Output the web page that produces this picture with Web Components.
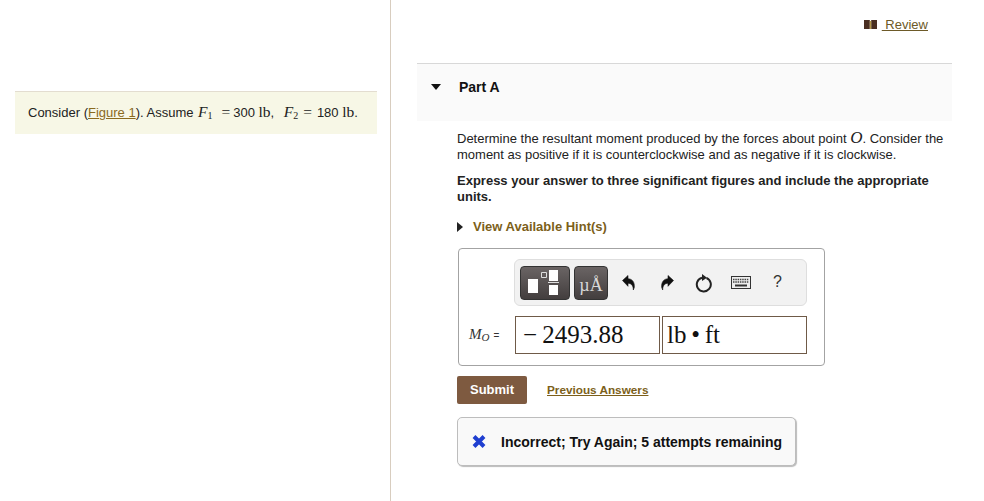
<!DOCTYPE html>
<html>
<head>
<meta charset="utf-8">
<title>Part A</title>
<style>
    html, body { margin: 0; padding: 0; background: white; }
    body { font-family: "Liberation Sans", Arial, sans-serif; font-size: 13px; color: #222; }
</style>
</head>
<body>
<quiz-page></quiz-page>

<script>
class QuizPage extends HTMLElement {
    constructor() {
        super();
        this.attachShadow({ mode: 'open' });
    }

    connectedCallback() {
        this.shadowRoot.innerHTML = `
            <style>
                :host { display: flex; width: 984px; height: 501px; overflow: hidden; }
                .left { width: 391px; box-sizing: border-box; padding: 91px 13px 0 15px; border-right: 1px solid #d8cdbf; flex: none; }
                .right { width: 535px; margin-left: 26px; flex: none; }
            </style>
            <div class="left"><intro-box></intro-box></div>
            <div class="right">
                <review-link></review-link>
                <part-header></part-header>
                <part-body></part-body>
            </div>
        `;
    }
}

class IntroBox extends HTMLElement {
    constructor() {
        super();
        this.attachShadow({ mode: 'open' });
    }

    connectedCallback() {
        this.shadowRoot.innerHTML = `
            <style>
                :host { display: block; height: 43px; box-sizing: border-box; background: #f7f7e6; border-top: 1px solid #e3ddd0; padding: 11px 0 0 13px; font-size: 13px; line-height: 17px; color: #222; white-space: nowrap; }
                a { color: #8a6a1e; text-decoration: underline; }
                .m { font-family: "Liberation Serif", serif; font-size: 15.500px; }
                .m i { font-style: italic; }
                .f1 { margin-left: 1px; }
                .f2 { margin-left: 6px; }
                .eq1 { margin: 0 3px 0 5px; }
                .eq2 { margin: 0 5px 0 1px; }
                sub { font-size: 10px; line-height: 0; vertical-align: -2px; }
            </style>
            Consider (<a href="#">Figure 1</a>). Assume <span class="m f1"><i>F</i><sub>1</sub></span><span class="m eq1"> =</span>300 <span class="m">lb</span>, <span class="m f2"><i>F</i><sub>2</sub></span><span class="m eq2"> =</span>180 <span class="m">lb</span>.
        `;
    }
}

class ReviewLink extends HTMLElement {
    constructor() {
        super();
        this.attachShadow({ mode: 'open' });
    }

    connectedCallback() {
        this.shadowRoot.innerHTML = `
            <style>
                :host { display: flex; justify-content: flex-end; align-items: flex-start; height: 63px; box-sizing: border-box; padding: 17px 24px 0 0; font-size: 13px; line-height: 15px; }
                svg { margin: 3px 5px 0 0; }
                a { color: #6d5a28; text-decoration: underline; white-space: pre; }
            </style>
            <svg width="13" height="9" viewBox="0 0 13 9"><path fill="#4a2f22" d="M0 0h5.800v9H0zM7.200 0H13v9H7.200z"/><path fill="#b59a4a" d="M5.800 1h1.400v8H5.800z"/></svg>
            <a href="#"> Review</a>
        `;
    }
}

class PartHeader extends HTMLElement {
    constructor() {
        super();
        this.attachShadow({ mode: 'open' });
    }

    connectedCallback() {
        this.shadowRoot.innerHTML = `
            <style>
                :host { display: flex; align-items: flex-start; height: 58px; box-sizing: border-box; background: #fafafa; border-top: 1px solid #d8d8d8; padding: 16px 0 0 14px; }
                svg { margin: 4px 18px 0 0; }
                b { font-size: 14px; line-height: 15px; color: #111; }
            </style>
            <svg width="10" height="6" viewBox="0 0 10 6"><path fill="#111" d="M0 0h10L5 6z"/></svg>
            <b>Part A</b>
        `;
    }
}

class PartBody extends HTMLElement {
    constructor() {
        super();
        this.attachShadow({ mode: 'open' });
    }

    connectedCallback() {
        this.shadowRoot.innerHTML = `
            <style>
                :host { display: block; padding: 10px 0 0 40px; font-size: 13px; line-height: 16px; color: #222; white-space: nowrap; }
                p { margin: 0; }
                .o { font-family: "Liberation Serif", serif; font-style: italic; font-size: 17px; line-height: 10px; }
                .express { margin-top: 10px; font-weight: bold; }
                .hint { display: flex; align-items: center; margin-top: 14px; height: 16px; color: #7c5f1a; font-weight: bold; }
                .hint svg { margin-right: 10px; }
                .actions { display: flex; align-items: center; margin-top: 10px; gap: 20px; }
                .submit { width: 70px; height: 28px; background: #7e5a40; border-radius: 2px; color: #fff; font-weight: bold; font-size: 13px; line-height: 28px; text-align: center; }
                .prev { color: #7c5f1a; font-weight: bold; font-size: 11.750px; text-decoration: underline; }
            </style>
            <p>Determine the resultant moment produced by the forces about point <span class="o">O</span>. Consider the<br>moment as positive if it is counterclockwise and as negative if it is clockwise.</p>
            <p class="express">Express your answer to three significant figures and include the appropriate<br>units.</p>
            <div class="hint">
                <svg width="6" height="10" viewBox="0 0 6 10"><path fill="#222" d="M0 0l6 5-6 5z"/></svg>
                View Available Hint(s)
            </div>
            <answer-box></answer-box>
            <div class="actions">
                <div class="submit">Submit</div>
                <a class="prev" href="#">Previous Answers</a>
            </div>
            <feedback-box>Incorrect; Try Again; 5 attempts remaining</feedback-box>
        `;
    }
}

class AnswerBox extends HTMLElement {
    constructor() {
        super();
        this.attachShadow({ mode: 'open' });
    }

    connectedCallback() {
        this.shadowRoot.innerHTML = `
            <style>
                :host { display: block; width: 367px; height: 118px; box-sizing: border-box; margin: 13px 0 10px 1px; border: 1px solid #a3a3a3; border-radius: 4px; padding: 10px 17px 0 56px; }
                math-toolbar { margin: 0 0 10px -1px; }
                .row { display: flex; align-items: center; }
                .label { width: 46px; margin-left: -46px; box-sizing: border-box; font-family: "Liberation Serif", serif; font-size: 15px; white-space: nowrap; color: #333; }
                .label sub { font-size: 11px; line-height: 0; vertical-align: -2px; }
                .label span { font-family: "Liberation Sans", sans-serif; font-size: 10px; margin-left: 4px; font-style: normal; }
                .field { height: 38px; box-sizing: border-box; border: 1px solid #6f5a48; font-family: "Liberation Serif", serif; font-size: 25px; line-height: 35px; color: #111; white-space: nowrap; }
                .value { width: 145px; padding-left: 7px; word-spacing: -1px; }
                .unit { width: 145px; margin-left: 2px; padding-left: 4px; word-spacing: -1.500px; }
            </style>
            <math-toolbar></math-toolbar>
            <div class="row">
                <div class="label"><i>M<sub>O</sub></i><span>=</span></div>
                <div class="field value">&minus; 2493.88</div>
                <div class="field unit">lb &bull; ft</div>
            </div>
        `;
    }
}

class MathToolbar extends HTMLElement {
    constructor() {
        super();
        this.attachShadow({ mode: 'open' });
    }

    connectedCallback() {
        this.shadowRoot.innerHTML = `
            <style>
                :host { display: flex; align-items: center; width: 293px; height: 47px; box-sizing: border-box; background: #f2f2f2; border: 1px solid #dedede; border-radius: 6px; padding: 0 0 0 5px; }
                .btn { height: 34px; box-sizing: border-box; border: 1px solid #333; border-radius: 4px; background: linear-gradient(#6a6464, #433e3e); display: flex; align-items: center; justify-content: center; flex: none; }
                .templates { width: 50px; margin-right: 4px; }
                .units { width: 34px; color: #d8d8d8; font-family: "Liberation Serif", serif; font-size: 18px; line-height: 20px; padding-top: 5px; }
                .tool { flex: none; display: flex; justify-content: center; align-items: center; width: 37px; color: #333; }
                .first { margin-left: 2px; width: 38px; }
                .help { font-size: 16px; line-height: 18px; width: 37px; margin-top: -2px; }
            </style>
            <div class="btn templates">
                <svg width="38" height="26" viewBox="0 0 38 26">
                    <path fill="#fff" d="M2 9h10v14H2zM23 0h9v11h-9zM23 15h9v10h-9z"/>
                    <path fill="#ddd" d="M22 12h11v1H22z"/>
                    <path fill="none" stroke="#ddd" d="M15.500 2.500h5v5h-5z"/>
                </svg>
            </div>
            <div class="btn units">&micro;&Aring;</div>
            <span class="tool first"><svg width="16" height="17" viewBox="0 0 16 17"><path fill="#111" stroke="#111" stroke-width=".6" d="M1.500 6.500L7 1.500v3.200c4.200.2 6.800 3.300 6.300 8.800l-1 2.500c0-4-1.500-6.600-5.300-6.800v3.100z"/></svg></span>
            <span class="tool"><svg width="16" height="17" viewBox="0 0 16 17"><path fill="#111" stroke="#111" stroke-width=".6" d="M14.500 6.500L9 1.500v3.200C4.800 4.900 2.200 8 2.700 13.500l1 2.500c0-4 1.500-6.600 5.300-6.800v3.100z"/></svg></span>
            <span class="tool"><svg width="18" height="20" viewBox="0 0 18 20"><path fill="none" stroke="#222" stroke-width="2" d="M11.500 5a7 7 0 1 1-4.500-.3"/><path fill="#222" d="M7 1l5 3.800-5 3.200z"/></svg></span>
            <span class="tool"><svg width="20" height="13" viewBox="0 0 20 13"><rect x=".5" y=".5" width="19" height="12" fill="#eee" stroke="#333"/><path stroke="#444" stroke-width="1.500" stroke-dasharray="1.500 .8" d="M2 3.500h16M2 6h16"/><path stroke="#333" stroke-width="2" d="M4 9.500h12"/></svg></span>
            <span class="tool help">?</span>
        `;
    }
}

class FeedbackBox extends HTMLElement {
    constructor() {
        super();
        this.attachShadow({ mode: 'open' });
    }

    connectedCallback() {
        this.shadowRoot.innerHTML = `
            <style>
                :host { display: flex; align-items: center; width: 339px; height: 49px; box-sizing: border-box; margin-top: 13px; background: #f9f9f9; border: 1px solid #bdbdbd; border-radius: 5px; box-shadow: 1px 1px 1px #bbb; padding-left: 14px; font-weight: bold; color: #111; font-size: 14px; white-space: nowrap; }
                svg { margin-right: 15px; flex: none; }
            </style>
            <svg width="14" height="13" viewBox="0 0 14 13"><path fill="none" stroke="#1f3fd0" stroke-width="4" d="M2 1.500l10 10M12 1.500l-10 10"/></svg>
            <slot></slot>
        `;
    }
}

customElements.define('quiz-page', QuizPage);
customElements.define('intro-box', IntroBox);
customElements.define('review-link', ReviewLink);
customElements.define('part-header', PartHeader);
customElements.define('part-body', PartBody);
customElements.define('answer-box', AnswerBox);
customElements.define('math-toolbar', MathToolbar);
customElements.define('feedback-box', FeedbackBox);
</script>
</body>
</html>
